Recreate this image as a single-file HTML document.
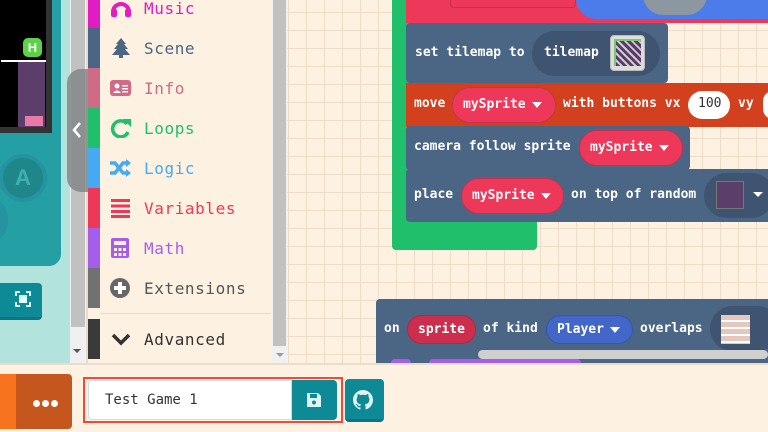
<!DOCTYPE html>
<html><head><meta charset="utf-8"><style>
*{margin:0;padding:0;box-sizing:border-box}
body{width:768px;height:432px;overflow:hidden;position:relative;background:#fdf1e1;font-family:"DejaVu Sans Mono","Liberation Mono",monospace}
.a{position:absolute}
.ws{left:287px;top:0;width:481px;height:363px;background-color:#fdf1e1;background-image:linear-gradient(#eddcc8 1px,transparent 1px),linear-gradient(90deg,#eddcc8 1px,transparent 1px);background-size:18px 18px;background-position:1px 12px}
.row{position:absolute;left:88px;width:184px;height:40px}
.row .s{position:absolute;left:0;top:0;width:12px;height:40px}
.row .t{position:absolute;left:56px;top:11px;font-size:16px;letter-spacing:0.6px}
.row svg{position:absolute;left:22px;top:10px}
.blk{position:absolute;border-radius:4px;color:#fff;font-weight:bold;font-size:13px;white-space:nowrap}
.blk span{position:absolute}
.pill{position:absolute;border-radius:20px;color:#fff;font-weight:bold;font-size:13px;white-space:nowrap}
.tri{display:inline-block;width:0;height:0;border-left:5px solid transparent;border-right:5px solid transparent;border-top:6px solid #fff;vertical-align:middle;margin-left:6px}
</style></head><body>
<div class="a" style="left:0;top:0;width:70px;height:363px;background:#b2e3dc"></div>
<div class="a" style="left:0;top:0;width:61px;height:266px;background:#249fa3;border-radius:0 0 12px 0"></div>
<div class="a" style="left:0;top:0;width:52px;height:133px;background:#333"></div>
<div class="a" style="left:0;top:0;width:46px;height:127px;background:#000"></div>
<div class="a" style="left:1px;top:60px;width:45px;height:2px;background:#fff"></div>
<div class="a" style="left:18px;top:62px;width:27px;height:65px;background:#5b3f6a"></div>
<div class="a" style="left:25px;top:116px;width:18px;height:10px;background:#e87aa8"></div>
<div class="a" style="left:23px;top:38px;width:19px;height:19px;border-radius:5px;background:#5fd04a;color:#fff;font-size:13px;font-weight:bold;text-align:center;line-height:19px;font-family:'Liberation Sans'">H</div>
<div class="a" style="left:-1px;top:154px;width:48px;height:48px;border-radius:50%;background:#2593a0"></div>
<div class="a" style="left:3px;top:158px;width:40px;height:40px;border-radius:50%;background:#1f8689;color:#3fb0b3;font-size:22px;font-weight:bold;text-align:center;line-height:40px;font-family:'Liberation Sans'">A</div>
<div class="a" style="left:-20px;top:200px;width:28px;height:40px;border-radius:50%;background:#2593a0"></div>
<div class="a" style="left:0;top:283px;width:42px;height:37px;background:#0e8a96;border-radius:0 4px 4px 0;border-bottom:3px solid #0b7580"></div>
<svg class="a" style="left:15px;top:291px" width="16" height="16"><path d="M1 5V1H5M11 1H15V5M15 11V15H11M5 15H1V11" stroke="#dff" stroke-width="2" fill="none"/><rect x="4" y="4" width="8" height="8" fill="#dff"/></svg>
<div class="a" style="left:70px;top:0;width:16px;height:363px;background:#f0f0f0"></div>
<div class="a" style="left:71px;top:0;width:14px;height:327px;background:#c1c1c1"></div>
<div class="a" style="left:73px;top:349px;width:0;height:0;border-left:4px solid transparent;border-right:4px solid transparent;border-top:4px solid #555"></div>
<div class="a" style="left:86px;top:0;width:2px;height:363px;background:#e7dccc"></div>
<div class="a" style="left:67px;top:69px;width:22px;height:123px;background:rgba(130,135,135,0.85);border-radius:14px 0 0 14px"></div>
<svg class="a" style="left:71px;top:121px" width="12" height="18"><path d="M9 2 L3 9 L9 16" stroke="#fff" stroke-width="2.5" fill="none"/></svg>
<div class="a" style="left:88px;top:0;width:184px;height:363px;background:#fdf1e1"></div>
<div class="row" style="top:-12px"><div class="s" style="background:#e11cc3"></div><svg width="22" height="20"><path d="M3 14 A8 8 0 0 1 19 14" stroke="#e11cc3" stroke-width="4" fill="none"/><rect x="1" y="11" width="6" height="8" rx="2" fill="#e11cc3"/><rect x="15" y="11" width="6" height="8" rx="2" fill="#e11cc3"/></svg><div class="t" style="color:#e11cc3">Music</div></div>
<div class="row" style="top:28px"><div class="s" style="background:#4b6584"></div><svg width="22" height="20"><path d="M11 0 L16 6 L14 6 L18 11 L15 11 L20 17 L2 17 L7 11 L4 11 L8 6 L6 6 Z" fill="#4b6584"/><rect x="9" y="16" width="4" height="4" fill="#4b6584"/></svg><div class="t" style="color:#4b6584">Scene</div></div>
<div class="row" style="top:68px"><div class="s" style="background:#cf6a87"></div><svg width="22" height="20"><rect x="0" y="2" width="21" height="16" rx="3" fill="#cf6a87"/><circle cx="7" cy="8" r="2.5" fill="#fff"/><path d="M3 15 Q7 10 11 15Z" fill="#fff"/><rect x="12" y="7" width="6" height="1.5" fill="#fff"/><rect x="12" y="10" width="6" height="1.5" fill="#fff"/><rect x="12" y="13" width="6" height="1.5" fill="#fff"/></svg><div class="t" style="color:#cf6a87">Info</div></div>
<div class="row" style="top:108px"><div class="s" style="background:#20bf6b"></div><svg width="22" height="20"><path d="M17 6 A8 8 0 1 0 18 14" stroke="#20bf6b" stroke-width="3.5" fill="none"/><path d="M13 1 L21 1 L21 9 Z" fill="#20bf6b"/></svg><div class="t" style="color:#20bf6b">Loops</div></div>
<div class="row" style="top:148px"><div class="s" style="background:#45aaf2"></div><svg width="22" height="20"><path d="M0 5 H5 L13 15 H17 M0 15 H5 L13 5 H17" stroke="#45aaf2" stroke-width="3.5" fill="none"/><path d="M16 1 L21 5 L16 9Z M16 11 L21 15 L16 19Z" fill="#45aaf2"/></svg><div class="t" style="color:#45aaf2">Logic</div></div>
<div class="row" style="top:188px"><div class="s" style="background:#ee3859"></div><svg width="22" height="20"><rect x="1" y="1" width="19" height="3" fill="#ee3859"/><rect x="1" y="6.5" width="19" height="3" fill="#ee3859"/><rect x="1" y="12" width="19" height="3" fill="#ee3859"/><rect x="1" y="17" width="19" height="3" fill="#ee3859"/></svg><div class="t" style="color:#ee3859">Variables</div></div>
<div class="row" style="top:228px"><div class="s" style="background:#a55eea"></div><svg width="22" height="20"><rect x="1" y="0" width="18" height="20" rx="2" fill="#a55eea"/><rect x="4" y="3" width="12" height="4" fill="#fdf1e1"/><g fill="#fdf1e1"><rect x="4" y="10" width="3" height="3"/><rect x="8.5" y="10" width="3" height="3"/><rect x="13" y="10" width="3" height="3"/><rect x="4" y="15" width="3" height="3"/><rect x="8.5" y="15" width="3" height="3"/><rect x="13" y="15" width="3" height="3"/></g></svg><div class="t" style="color:#a55eea">Math</div></div>
<div class="row" style="top:268px"><div class="s" style="background:#717171"></div><svg width="22" height="22" style="top:9px"><circle cx="10" cy="11" r="10" fill="#666"/><rect x="8" y="5" width="4" height="12" fill="#fff"/><rect x="4" y="9" width="12" height="4" fill="#fff"/></svg><div class="t" style="color:#555">Extensions</div></div>
<div class="a" style="left:100px;top:313px;width:171px;height:1px;background:#e6d9c8"></div>
<div class="row" style="top:319px"><div class="s" style="background:#3a3a3a"></div><svg width="22" height="20"><path d="M3 6 L11 14 L19 6" stroke="#333" stroke-width="3.5" fill="none"/></svg><div class="t" style="color:#333">Advanced</div></div>
<div class="a" style="left:272px;top:0;width:15px;height:363px;background:#f0f0f0"></div>
<div class="a" style="left:273px;top:0;width:13px;height:346px;background:#c1c1c1"></div>
<div class="a" style="left:276px;top:353px;width:0;height:0;border-left:4px solid transparent;border-right:4px solid transparent;border-top:4px solid #999"></div>
<div class="a ws"></div>
<div class="blk" style="left:392px;top:-10px;width:145px;height:260px;background:#20bf6b"></div>
<div class="blk" style="left:406px;top:-10px;width:362px;height:33px;background:#ee3859;border-radius:0"></div>
<div class="a" style="left:450px;top:-10px;width:126px;height:18px;border:1px solid #c52f4b;border-radius:4px"></div>
<div class="a" style="left:576px;top:-10px;width:200px;height:29px;background:#4c7bea;border-radius:0 0 0 20px"></div>
<div class="a" style="left:643px;top:-10px;width:64px;height:25px;background:#8d97a1;border-radius:0 0 20px 20px"></div>
<div class="blk" style="left:406px;top:23px;width:262px;height:60px;background:#4b6584"><span style="left:9px;top:22px">set tilemap to</span></div>
<div class="pill" style="left:532px;top:31px;width:128px;height:45px;background:#3f5470;border-radius:23px"><span style="position:absolute;left:12px;top:14px">tilemap</span></div>
<div class="a" style="left:610px;top:35px;width:35px;height:36px;background:#ddd;border-radius:4px;border:1px solid #bbb"></div>
<div class="a" style="left:614px;top:39px;width:27px;height:27px;background:repeating-linear-gradient(45deg,#5a3a6a 0 3px,#ccc 3px 5px);border-left:2px solid #7c6;border-top:2px solid #7c6"></div>
<div class="blk" style="left:406px;top:83px;width:362px;height:44px;background:#d2401e;border-radius:0"><span style="left:8px;top:13px">move</span><span style="left:157px;top:13px">with buttons vx</span><span style="left:332px;top:13px">vy</span></div>
<div class="pill" style="left:452px;top:87px;width:104px;height:36px;background:#ee3859;border:1px solid #c83050"><span style="position:absolute;left:10px;top:9px">mySprite<i class="tri"></i></span></div>
<div class="pill" style="left:688px;top:91px;width:42px;height:28px;background:#fff;color:#333;font-weight:normal"><span style="position:absolute;left:10px;top:5px">100</span></div>
<div class="a" style="left:763px;top:91px;width:20px;height:28px;background:#fff;border-radius:14px"></div>
<div class="blk" style="left:406px;top:126px;width:284px;height:44px;background:#4b6584"><span style="left:8px;top:13px">camera follow sprite</span></div>
<div class="pill" style="left:579px;top:130px;width:104px;height:36px;background:#ee3859;border:1px solid #c83050"><span style="position:absolute;left:10px;top:9px">mySprite<i class="tri"></i></span></div>
<div class="blk" style="left:406px;top:169px;width:362px;height:53px;background:#4b6584;border-radius:4px 0 0 4px"><span style="left:8px;top:18px">place</span><span style="left:165px;top:18px">on top of random</span></div>
<div class="pill" style="left:461px;top:178px;width:103px;height:36px;background:#ee3859;border:1px solid #c83050"><span style="position:absolute;left:10px;top:9px">mySprite<i class="tri"></i></span></div>
<div class="a" style="left:704px;top:173px;width:70px;height:45px;background:#3f5470;border-radius:23px"></div>
<div class="a" style="left:716px;top:181px;width:28px;height:28px;background:#5b3f6a;border:1px solid #777"></div>
<div class="a" style="left:753px;top:192px;border-left:5px solid transparent;border-right:5px solid transparent;border-top:5px solid #fff"></div>
<div class="blk" style="left:376px;top:299px;width:392px;height:64px;background:#4b6584;border-radius:4px 0 0 0"><span style="left:8px;top:22px">on</span><span style="left:107px;top:22px">of kind</span><span style="left:264px;top:22px">overlaps</span></div>
<div class="pill" style="left:407px;top:315px;width:69px;height:29px;background:#cc2f4e;border:1px solid #b02843"><span style="position:absolute;left:10px;top:6px">sprite</span></div>
<div class="pill" style="left:546px;top:315px;width:87px;height:29px;background:#4267c9;border:1px solid #3556b0"><span style="position:absolute;left:10px;top:6px">Player<i class="tri"></i></span></div>
<div class="a" style="left:710px;top:306px;width:70px;height:45px;background:#3f5470;border-radius:23px"></div>
<div class="a" style="left:721px;top:315px;width:29px;height:29px;background:repeating-linear-gradient(#e4c7bd 0 5px,#fff 5px 7px)"></div>
<div class="a" style="left:478px;top:350px;width:290px;height:9px;background:#cfcfcf;border-radius:5px"></div>
<div class="a" style="left:391px;top:359px;width:20px;height:6px;background:#a55eea;border-radius:4px 4px 0 0"></div>
<div class="a" style="left:429px;top:359px;width:152px;height:6px;background:#a55eea;border-radius:4px 4px 0 0"></div>
<div class="a" style="left:0;top:363px;width:768px;height:69px;background:#fdf1e1;border-top:2px solid #e9dccb"></div>
<div class="a" style="left:0;top:374px;width:72px;height:55px;background:#c4561e;border-radius:0 4px 4px 0"></div>
<div class="a" style="left:0;top:374px;width:16px;height:55px;background:#f7731e"></div>
<div class="a" style="left:33px;top:400px;width:7px;height:7px;border-radius:50%;background:#fff;box-shadow:9px 0 #fff,18px 0 #fff"></div>
<div class="a" style="left:83px;top:377px;width:260px;height:46px;border:2px solid #ef4a3a"></div>
<div class="a" style="left:88px;top:380px;width:204px;height:40px;background:#fff;border:1px solid #cde;border-radius:4px 0 0 4px"></div>
<div class="a" style="left:105px;top:392px;font-size:14px;color:#333">Test Game 1</div>
<div class="a" style="left:292px;top:380px;width:45px;height:40px;background:#0e8a96;border-radius:0 4px 4px 0"></div>
<svg class="a" style="left:306px;top:392px" width="16" height="16"><path d="M1 1 H12 L15 4 V15 H1 Z" fill="#e0f4f6"/><rect x="4" y="2" width="7" height="4" fill="#0e8a96"/><circle cx="8" cy="10.5" r="2" fill="#0e8a96"/></svg>
<div class="a" style="left:345px;top:379px;width:39px;height:43px;background:#0e8a96;border-radius:4px;border-bottom:3px solid #0b7580"></div>
<svg class="a" style="left:353px;top:390px" width="20" height="20" viewBox="0 0 16 16"><path fill="#e0f4f6" d="M8 0C3.6 0 0 3.6 0 8c0 3.5 2.300 6.500 5.500 7.600.4.1.5-.2.5-.4v-1.400c-2.200.5-2.700-1-2.700-1-.4-.9-.9-1.200-.9-1.200-.7-.5.1-.5.1-.5.8.1 1.200.8 1.200.8.7 1.300 1.900.9 2.300.7.1-.5.3-.9.5-1.100-1.800-.2-3.600-.9-3.600-4 0-.9.3-1.600.8-2.100-.1-.2-.4-1 .1-2.100 0 0 .7-.2 2.200.8.6-.2 1.300-.3 2-.3s1.400.1 2 .3c1.500-1 2.200-.8 2.200-.8.4 1.100.2 1.900.1 2.100.5.6.8 1.300.8 2.100 0 3.100-1.900 3.700-3.600 3.900.3.3.5.8.5 1.500v2.200c0 .2.1.5.6.4C13.700 14.500 16 11.500 16 8c0-4.400-3.600-8-8-8z"/></svg>
</body></html>
